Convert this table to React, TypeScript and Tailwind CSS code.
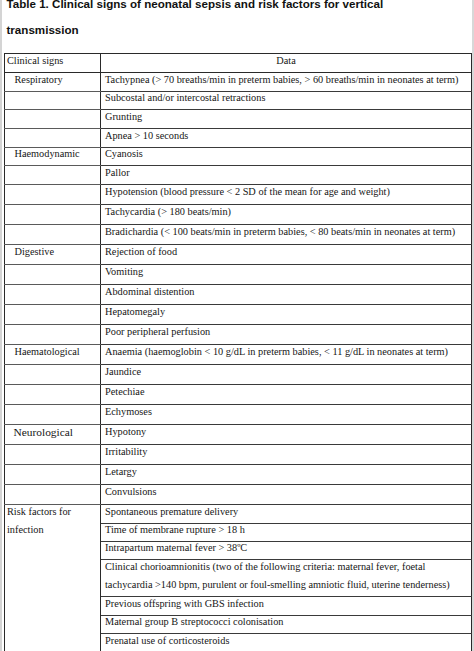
import React from 'react';

type Row = { label?: string; big?: boolean; data: string; h: string };

const sections: { rows: Row[]; risk?: boolean }[] = [
  {
    rows: [
      { label: 'Respiratory', data: 'Tachypnea (> 70 breaths/min in preterm babies, > 60 breaths/min in neonates at term)', h: 'h-[18.7px]' },
      { data: 'Subcostal and/or intercostal retractions', h: 'h-[18.7px]' },
      { data: 'Grunting', h: 'h-[18.7px]' },
      { data: 'Apnea > 10 seconds', h: 'h-[18.7px]' },
    ],
  },
  {
    rows: [
      { label: 'Haemodynamic', data: 'Cyanosis', h: 'h-[18.7px]' },
      { data: 'Pallor', h: 'h-[18.7px]' },
      { data: 'Hypotension (blood pressure < 2 SD of the mean for age and weight)', h: 'h-[20px]' },
      { data: 'Tachycardia (> 180 beats/min)', h: 'h-[20px]' },
      { data: 'Bradichardia (< 100 beats/min in preterm babies, < 80 beats/min in neonates at term)', h: 'h-[20px]' },
    ],
  },
  {
    rows: [
      { label: 'Digestive', data: 'Rejection of food', h: 'h-[20px]' },
      { data: 'Vomiting', h: 'h-[20px]' },
      { data: 'Abdominal distention', h: 'h-[20px]' },
      { data: 'Hepatomegaly', h: 'h-[20px]' },
      { data: 'Poor peripheral perfusion', h: 'h-[20px]' },
    ],
  },
  {
    rows: [
      { label: 'Haematological', data: 'Anaemia (haemoglobin < 10 g/dL in preterm babies, < 11 g/dL in neonates at term)', h: 'h-[20px]' },
      { data: 'Jaundice', h: 'h-[20px]' },
      { data: 'Petechiae', h: 'h-[20px]' },
      { data: 'Echymoses', h: 'h-[20px]' },
    ],
  },
  {
    rows: [
      { label: 'Neurological', big: true, data: 'Hypotony', h: 'h-[20px]' },
      { data: 'Irritability', h: 'h-[20px]' },
      { data: 'Letargy', h: 'h-[20px]' },
      { data: 'Convulsions', h: 'h-[20px]' },
    ],
  },
  {
    risk: true,
    rows: [
      { data: 'Spontaneous premature delivery', h: 'h-[18.4px]' },
      { data: 'Time of membrane rupture > 18 h', h: 'h-[18.4px]' },
      { data: 'Intrapartum maternal fever > 38ºC', h: 'h-[18.4px]' },
      { data: 'Clinical chorioamnionitis (two of the following criteria: maternal fever, foetal tachycardia >140 bpm, purulent or foul-smelling amniotic fluid, uterine tenderness)', h: 'h-[37px]' },
      { data: 'Previous offspring with GBS infection', h: 'h-[18.4px]' },
      { data: 'Maternal group B streptococci colonisation', h: 'h-[18.4px]' },
      { data: 'Prenatal use of corticosteroids', h: 'h-[18.4px]' },
    ],
  },
];

export default function App() {
  return (
    <div className="w-[474px] h-[651px] overflow-hidden bg-white border-l-2 border-l-[#d4d4d4] border-r-2 border-r-[#d8d8d8] text-[#161616]">
      {/* Caption */}
      <div className="-mt-[9.5px] pl-[4.5px] font-[family-name:'Liberation_Sans',Arial,sans-serif] font-bold text-[11.6px] leading-[26.5px] text-[#111]">
        <p>Table 1. Clinical signs of neonatal sepsis and risk factors for vertical</p>
        <p>transmission</p>
      </div>

      <table className="mt-[9.5px] ml-[2px] w-[468px] table-fixed border-collapse font-[family-name:'Liberation_Serif','Times_New_Roman',serif] text-[10.3px]">
        <colgroup>
          <col className="w-[96px]" />
          <col />
        </colgroup>
        <tbody>
          <tr className="h-[19px]">
            <td className="align-top border border-[#2a2a2a] p-0 pl-[2px]">
              <div className="-mt-[2.5px] leading-[18.4px]">Clinical signs</div>
            </td>
            <td className="align-top border border-[#2a2a2a] p-0 text-center">
              <div className="-mt-[2.5px] leading-[18.4px]">Data</div>
            </td>
          </tr>
          {sections.map((sec, si) =>
            sec.rows.map((r, ri) => (
              <tr key={`${si}-${ri}`} className={r.h}>
                {sec.risk ? (
                  ri === 0 && (
                    <td rowSpan={sec.rows.length} className="align-top border border-[#2a2a2a] p-0 pl-[2px]">
                      <div className="-mt-[2.5px] leading-[18.4px] w-[80px]">Risk factors for infection</div>
                    </td>
                  )
                ) : (
                  <td className="align-top border border-x-[#2a2a2a] border-y-[#5a5a5a] p-0 pl-[9.5px]">
                    {r.label && (
                      <div className={r.big ? '-mt-[2.5px] -ml-[1px] leading-[18.4px] text-[11.4px]' : '-mt-[2.5px] leading-[18.4px]'}>
                        {r.label}
                      </div>
                    )}
                  </td>
                )}
                <td className="align-top border border-x-[#2a2a2a] border-y-[#3a3a3a] p-0 pl-[4px] pr-[4px]">
                  <div className="-mt-[2.5px] leading-[18.4px]">{r.data}</div>
                </td>
              </tr>
            ))
          )}
        </tbody>
      </table>
    </div>
  );
}
